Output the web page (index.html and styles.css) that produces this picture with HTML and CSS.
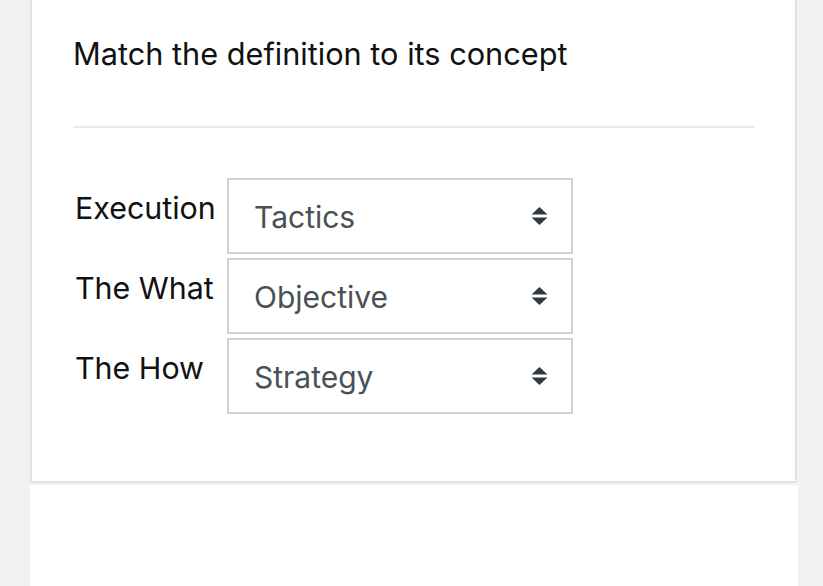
FILE: index.html
```html
<!DOCTYPE html>
<html lang="en">
<head>
<meta charset="utf-8">
<title>Match question</title>
<link rel="stylesheet" href="styles.css">
</head>
<body>
<div class="page">
  <div class="card">
    <h2 class="qtext">Match the definition to its concept</h2>
    <hr class="rule">
    <div class="answers">
      <div class="row">
        <span class="label">Execution</span>
        <div class="select"><span class="value">Tactics</span>
          <svg class="arrows" width="17" height="20" viewBox="0 0 17 20"><path d="M8.5 1 L16.5 8.5 H0.5 Z M0.5 11.5 H16.5 L8.5 19 Z" fill="#343a40"/></svg>
        </div>
      </div>
      <div class="row">
        <span class="label">The What</span>
        <div class="select"><span class="value">Objective</span>
          <svg class="arrows" width="17" height="20" viewBox="0 0 17 20"><path d="M8.5 1 L16.5 8.5 H0.5 Z M0.5 11.5 H16.5 L8.5 19 Z" fill="#343a40"/></svg>
        </div>
      </div>
      <div class="row">
        <span class="label">The How</span>
        <div class="select"><span class="value">Strategy</span>
          <svg class="arrows" width="17" height="20" viewBox="0 0 17 20"><path d="M8.5 1 L16.5 8.5 H0.5 Z M0.5 11.5 H16.5 L8.5 19 Z" fill="#343a40"/></svg>
        </div>
      </div>
    </div>
  </div>
  <div class="below"></div>
</div>
</body>
</html>
```
FILE: styles.css
```css
html, body {
  margin: 0;
  padding: 0;
  background: #f2f2f2;
  height: 100%;
}
body {
  font-family: Inter, "Liberation Sans", sans-serif;
  color: #111;
  overflow: hidden;
}
.page {
  margin-left: 30px;
  width: 768px;
  display: flex;
  flex-direction: column;
  height: 100%;
}
.card {
  width: 767px;
  box-sizing: border-box;
  background: #fff;
  border: 2px solid #e2e2e2;
  border-top: none;
  padding: 32px 40px 67px 41px;
}
.qtext {
  margin: 0;
  font-size: 30.7px;
  font-weight: 400;
  line-height: 44px;
}
.rule {
  margin: 50px 0 0 0;
  border: none;
  border-top: 2px solid #e9e9e9;
  height: 0;
}
.answers {
  margin-top: 50px;
  display: flex;
  flex-direction: column;
  gap: 4px;
}
.row {
  display: flex;
  align-items: flex-start;
  gap: 12px;
}
.label {
  font-size: 30.4px;
  line-height: 40px;
  padding-top: 10px;
  margin-left: 2px;
  width: 140px;
}
.select {
  width: 346px;
  height: 76px;
  box-sizing: border-box;
  border: 2px solid #ced0d3;
  display: flex;
  align-items: center;
  justify-content: space-between;
  padding: 0 23px 0 25px;
}
.value {
  font-size: 30px;
  color: #495057;
  line-height: 40px;
  padding-top: 2px;
}
.arrows {
  display: block;
}
.below {
  margin-top: 2px;
  flex: 1;
  background: #fff;
}
```
